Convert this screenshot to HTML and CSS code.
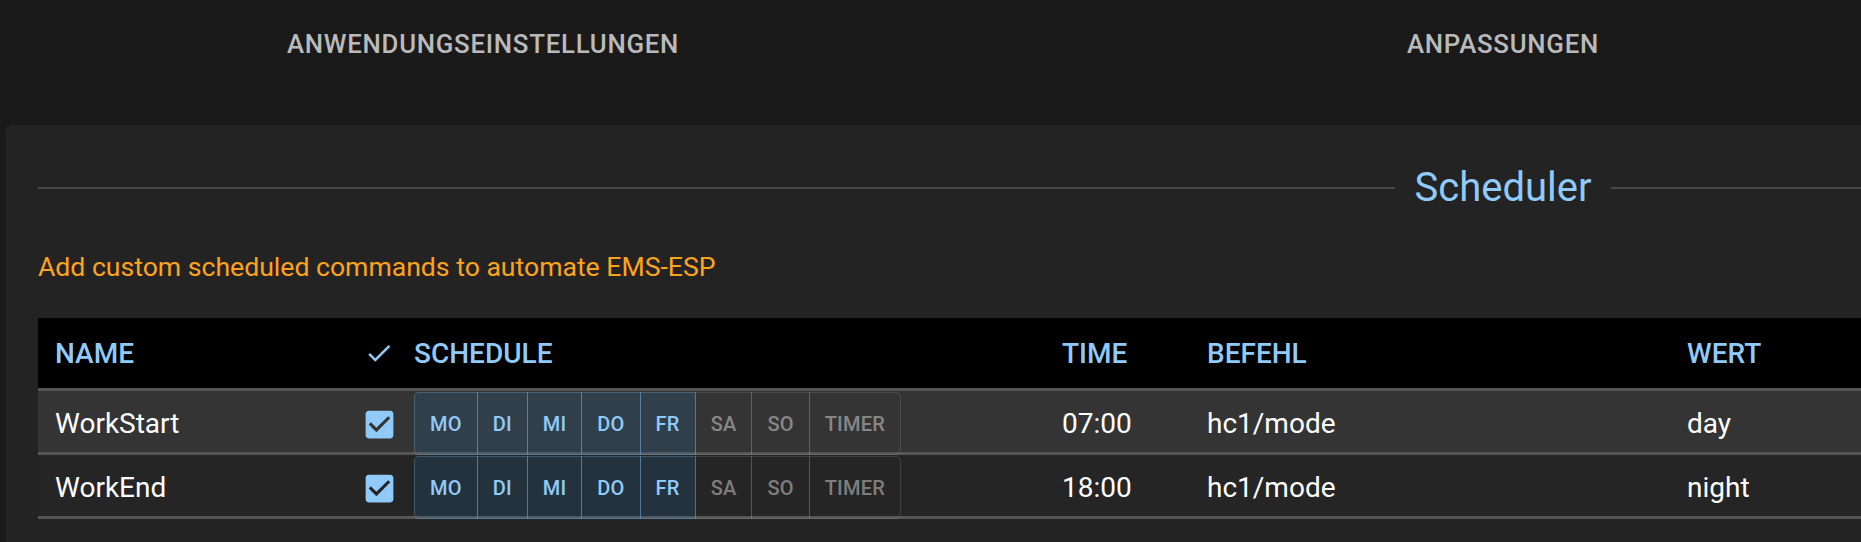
FILE: index.html
```html
<!DOCTYPE html>
<html lang="de">
<head>
<meta charset="utf-8">
<title>Scheduler</title>
<link rel="stylesheet" href="styles.css">
</head>
<body>
<div class="page">
  <nav class="tabs">
    <div class="tab tab-app">ANWENDUNGSEINSTELLUNGEN</div>
    <div class="tab tab-custom">ANPASSUNGEN</div>
  </nav>
  <section class="card">
    <div class="divider">
      <span class="line line-before"></span>
      <span class="divider-text">Scheduler</span>
      <span class="line line-after"></span>
    </div>
    <p class="desc">Add custom scheduled commands to automate EMS-ESP</p>
    <div class="table">
      <div class="row head">
        <div class="cell c-name">NAME</div>
        <div class="cell c-check">
          <svg class="head-check" viewBox="0 0 24 24" width="30" height="30"><path d="M9 16.17 4.83 12l-1.42 1.41L9 19 21 7l-1.41-1.41z"/></svg>
        </div>
        <div class="cell c-sched">SCHEDULE</div>
        <div class="cell">TIME</div>
        <div class="cell">BEFEHL</div>
        <div class="cell">WERT</div>
      </div>
      <div class="row body odd">
        <div class="cell c-name">WorkStart</div>
        <div class="cell c-check">
          <svg class="cb" viewBox="0 0 24 24" width="37" height="37"><path fill-rule="evenodd" d="M19 3H5c-1.11 0-2 .9-2 2v14c0 1.1.89 2 2 2h14c1.11 0 2-.9 2-2V5c0-1.1-.89-2-2-2zm-9 14l-5-5 1.41-1.41L10 14.170l7.59-7.59L19 8l-9 9z"/></svg>
        </div>
        <div class="cell c-sched">
          <div class="group">
            <span class="tb on">MO</span><span class="tb on">DI</span><span class="tb on">MI</span><span class="tb on">DO</span><span class="tb on">FR</span><span class="tb">SA</span><span class="tb">SO</span><span class="tb">TIMER</span>
          </div>
        </div>
        <div class="cell">07:00</div>
        <div class="cell">hc1/mode</div>
        <div class="cell">day</div>
      </div>
      <div class="row body">
        <div class="cell c-name">WorkEnd</div>
        <div class="cell c-check">
          <svg class="cb" viewBox="0 0 24 24" width="37" height="37"><path fill-rule="evenodd" d="M19 3H5c-1.11 0-2 .9-2 2v14c0 1.1.89 2 2 2h14c1.11 0 2-.9 2-2V5c0-1.1-.89-2-2-2zm-9 14l-5-5 1.41-1.41L10 14.17l7.59-7.59L19 8l-9 9z"/></svg>
        </div>
        <div class="cell c-sched">
          <div class="group">
            <span class="tb on">MO</span><span class="tb on">DI</span><span class="tb on">MI</span><span class="tb on">DO</span><span class="tb on">FR</span><span class="tb">SA</span><span class="tb">SO</span><span class="tb">TIMER</span>
          </div>
        </div>
        <div class="cell">18:00</div>
        <div class="cell">hc1/mode</div>
        <div class="cell">night</div>
      </div>
    </div>
  </section>
</div>
</body>
</html>
```
FILE: styles.css
```css
html, body {
  margin: 0;
  padding: 0;
  background: #1a1a1a;
  overflow: hidden;
}
body {
  font-family: Roboto, "Liberation Sans", Arial, sans-serif;
  color: #fff;
}
.page {
  width: 1861px;
  height: 542px;
  overflow: hidden;
}
.tabs {
  display: grid;
  grid-template-columns: 966px 1074px;
  height: 88px;
}
.tab {
  display: flex;
  align-items: center;
  justify-content: center;
  font-size: 25.8px;
  font-weight: 500;
  letter-spacing: 0.02857em;
  color: #bababa;
}
.card {
  margin: 37px 0 0 6px;
  width: 2100px;
  min-height: 500px;
  background: #232323;
  border-radius: 5px;
  padding: 40px 0 0 32px;
  box-sizing: border-box;
}
.divider {
  display: flex;
  align-items: center;
  height: 46px;
}
.line {
  height: 2px;
  background: #464646;
}
.line-before {
  flex: 0 0 1357px;
}
.line-after {
  flex: 1;
}
.divider-text {
  padding: 0 19.5px;
  font-size: 40px;
  line-height: 46px;
  color: #90caf9;
}
.desc {
  margin: 41px 0 0;
  font-size: 26.6px;
  line-height: 30px;
  color: #ffa31a;
}
.table {
  margin-top: 36px;
}
.row {
  display: grid;
  grid-template-columns: 316px 50px 658px 145px 480px 1fr;
  align-items: center;
  border-bottom: 3px solid #555;
  font-size: 28px;
}
.head {
  height: 70px;
  background: #000;
  color: #90caf9;
  font-weight: 500;
}
.body {
  height: 61px;
  background: #252525;
}
.body.odd {
  background: #343434;
}
.cell {
  white-space: nowrap;
}
.c-name {
  padding-left: 17px;
}
.c-check {
  display: flex;
  justify-content: center;
  align-items: center;
}
.head-check {
  fill: #90caf9;
  display: block;
}
.cb {
  fill: #90caf9;
  display: block;
  margin-top: 3px;
}
.c-sched {
  padding-left: 10px;
}
.group {
  display: inline-flex;
  height: 63px;
  margin-top: 1px;
}
.tb {
  display: flex;
  align-items: center;
  padding: 0 15px;
  border: 1px solid rgba(255, 255, 255, 0.12);
  margin-left: -1px;
  font-size: 20px;
  font-weight: 500;
  letter-spacing: 0.2px;
  color: rgba(255, 255, 255, 0.42);
}
.tb:first-child {
  margin-left: 0;
  border-radius: 5px 0 0 5px;
}
.tb:last-child {
  border-radius: 0 5px 5px 0;
}
.tb.on {
  color: #90caf9;
  background: rgba(33, 150, 243, 0.12);
  border-color: rgba(144, 202, 249, 0.25);
}
```
